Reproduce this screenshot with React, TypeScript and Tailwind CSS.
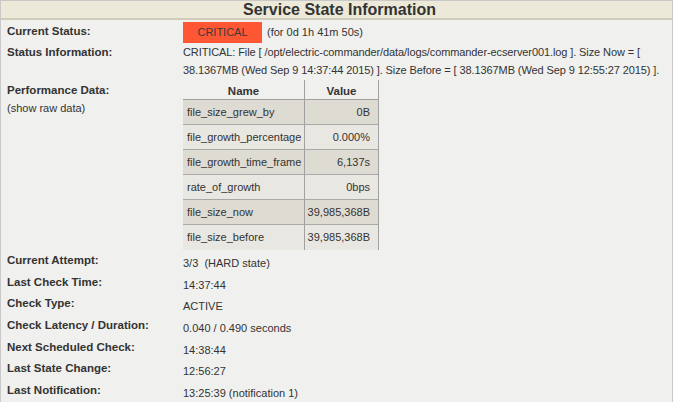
import React from "react";

const perf = [
  ["file_size_grew_by", "0B"],
  ["file_growth_percentage", "0.000%"],
  ["file_growth_time_frame", "6,137s"],
  ["rate_of_growth", "0bps"],
  ["file_size_now", "39,985,368B"],
  ["file_size_before", "39,985,368B"],
];

const tail = [
  ["Current Attempt:", "3/3\u00a0\u00a0(HARD state)"],
  ["Last Check Time:", "14:37:44"],
  ["Check Type:", "ACTIVE"],
  ["Check Latency / Duration:", "0.040 / 0.490 seconds"],
  ["Next Scheduled Check:", "14:38:44"],
  ["Last State Change:", "12:56:27"],
  ["Last Notification:", "13:25:39 (notification 1)"],
];

export default function App() {
  return (
    <div
      className="w-[673px] h-[402px] overflow-hidden bg-[#f0f0ee] text-[#333] border-l border-r border-[#c9c9c9]"
      style={{ fontFamily: '"Liberation Sans", Arial, sans-serif' }}
    >
      <div className="h-[20px] bg-[#ece9d8] border-t border-[#c8c8c8] border-b-2 border-b-[#cfccbc] flex items-center justify-center">
        <span className="text-[16px] font-bold leading-[16px] text-[#333] pl-[6px]">Service State Information</span>
      </div>

      <div className="pl-[6px]">
        {/* Current Status */}
        <div className="flex h-[23px] pt-[1px]">
          <div className="w-[176px] text-[11.5px] font-bold leading-[21px]">Current Status:</div>
          <div className="flex items-center">
            <div className="w-[79px] h-[21px] bg-[#ff5733] flex items-center justify-center text-[11px] text-[#3a3a3a]">
              CRITICAL
            </div>
            <span className="text-[11px] ml-[5px]">(for 0d 1h 41m 50s)</span>
          </div>
        </div>

        {/* Status Information */}
        <div className="flex h-[37px]">
          <div className="w-[176px] text-[11.5px] font-bold leading-[18px]">Status Information:</div>
          <div className="text-[11px] leading-[18px] whitespace-nowrap tracking-[-0.1px]">
            CRITICAL: File [ /opt/electric-commander/data/logs/commander-ecserver001.log ]. Size Now = [
            <br />
            38.1367MB (Wed Sep 9 14:37:44 2015) ]. Size Before = [ 38.1367MB (Wed Sep 9 12:55:27 2015) ].
          </div>
        </div>

        {/* Performance Data */}
        <div className="flex h-[170px]">
          <div className="w-[176px] text-[11.5px] leading-[18px] pt-[1px]">
            <div className="font-bold">Performance Data:</div>
            <div className="text-[11px]">(show raw data)</div>
          </div>
          <div className="w-[196px] border-r border-[#a0a0a0] h-[170px]">
            <div className="flex h-[20px] border-b border-[#a0a0a0]">
              <div className="w-[122px] border-r border-[#a0a0a0] text-center text-[11.5px] font-bold leading-[20px] pt-[1px]">
                Name
              </div>
              <div className="flex-1 text-center text-[11.5px] font-bold leading-[20px] pt-[1px]">Value</div>
            </div>
            {perf.map(([n, v], i) => (
              <div
                key={n}
                className={`flex h-[25px] ${i < perf.length - 1 ? "border-b border-[#a8a8a8]" : ""} ${
                  i % 2 === 0 ? "bg-[#dedbd3]" : "bg-[#e9e7e1]"
                }`}
              >
                <div className="w-[122px] border-r border-[#a0a0a0] pl-[4px] text-[11px] flex items-center">{n}</div>
                <div className="flex-1 pr-[8px] text-[11px] flex items-center justify-end">{v}</div>
              </div>
            ))}
          </div>
        </div>

        {tail.map(([l, v]) => (
          <div key={l} className="flex h-[21.7px]">
            <div className="w-[176px] text-[11.5px] font-bold leading-[14px] pt-[3px]">{l}</div>
            <div className="text-[11px] leading-[14px] pt-[6px] whitespace-pre">{v}</div>
          </div>
        ))}
      </div>
    </div>
  );
}
